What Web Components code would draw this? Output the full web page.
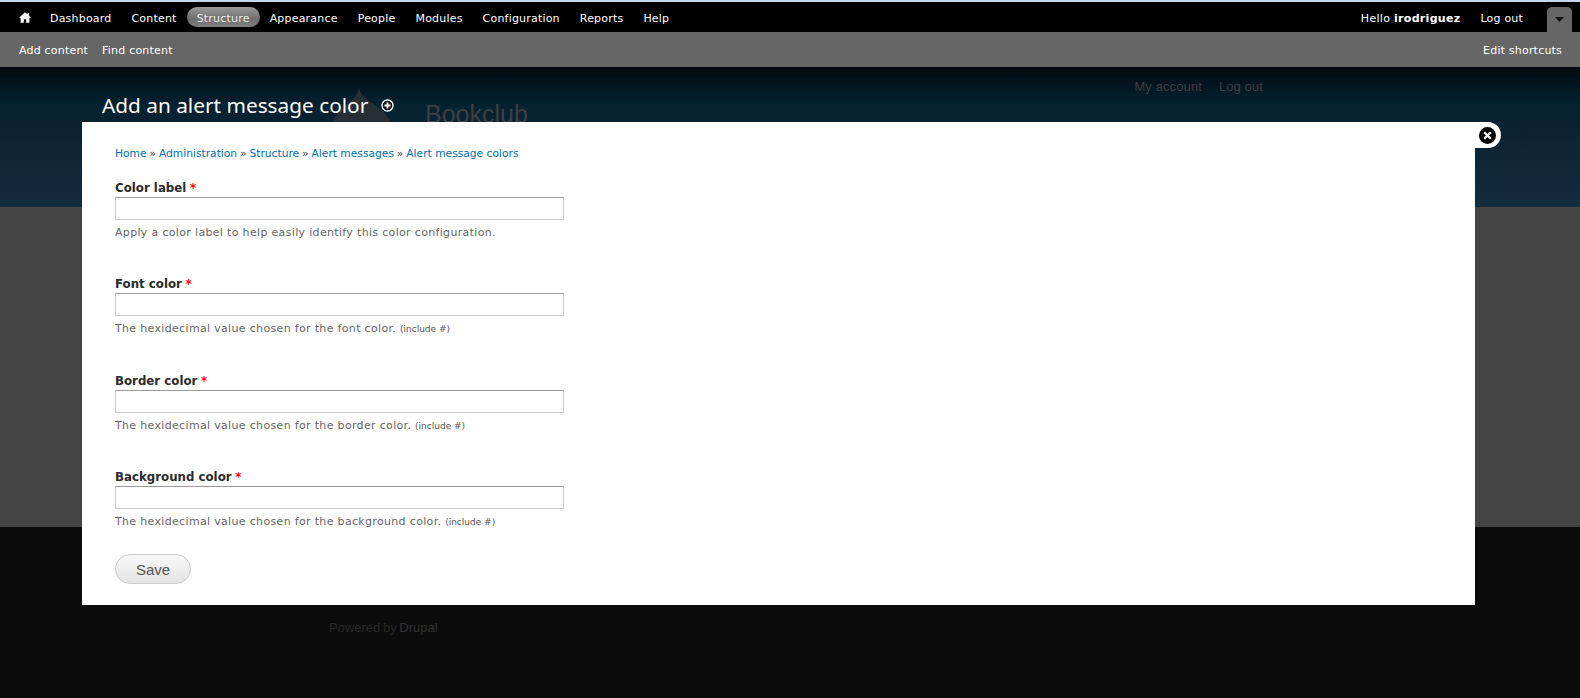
<!DOCTYPE html>
<html>
<head>
<meta charset="utf-8">
<title>Add an alert message color</title>
<style>
  html, body { margin: 0; height: 698px; overflow: hidden; background: #0b0b0b; }
  body { position: relative; font-family: "DejaVu Sans", sans-serif; }
</style>
</head>
<body>
<admin-toolbar>
  <tool-link slot="nav">Dashboard</tool-link>
  <tool-link slot="nav">Content</tool-link>
  <tool-link slot="nav" active>Structure</tool-link>
  <tool-link slot="nav">Appearance</tool-link>
  <tool-link slot="nav">People</tool-link>
  <tool-link slot="nav">Modules</tool-link>
  <tool-link slot="nav">Configuration</tool-link>
  <tool-link slot="nav">Reports</tool-link>
  <tool-link slot="nav">Help</tool-link>
  <span slot="user">Hello <b>irodriguez</b></span>
  <span slot="logout">Log out</span>
  <span slot="shortcuts">Add content</span>
  <span slot="shortcuts">Find content</span>
  <span slot="edit">Edit shortcuts</span>
</admin-toolbar>
<site-page></site-page>
<overlay-layer>
  <span slot="title">Add an alert message color</span>
  <bread-crumb>
    <a>Home</a> » <a>Administration</a> » <a>Structure</a> » <a>Alert messages</a> » <a>Alert message colors</a>
  </bread-crumb>
  <form-field label="Color label">Apply a color label to help easily identify this color configuration.</form-field>
  <form-field label="Font color">The hexidecimal value chosen for the font color. <small>(include #)</small></form-field>
  <form-field label="Border color">The hexidecimal value chosen for the border color. <small>(include #)</small></form-field>
  <form-field label="Background color">The hexidecimal value chosen for the background color. <small>(include #)</small></form-field>
  <save-button>Save</save-button>
</overlay-layer>

<script>
class ToolLink extends HTMLElement {
  constructor() {
    super();
    this.attachShadow({ mode: "open" });
    this.shadowRoot.innerHTML = `
      <style>
        :host { display: block; padding: 0 10px; height: 20px; line-height: 23px; border-radius: 10px; color: #fff; white-space: nowrap; }
        :host([active]) { background: linear-gradient(#9a9a9a, #6e6e6e 60%, #808080); color: #eee; }
      </style>
      <slot></slot>`;
  }
}
customElements.define("tool-link", ToolLink);

class AdminToolbar extends HTMLElement {
  constructor() {
    super();
    this.attachShadow({ mode: "open" });
    this.shadowRoot.innerHTML = `
      <style>
        :host { display: block; font: 11px/1 "DejaVu Sans", sans-serif; letter-spacing: .2px; color: #fff; border-top: 2px solid #c6d6ea; }
        .bar { height: 30px; background: #000; display: flex; align-items: center; padding: 0 8px 0 19px; }
        .home { width: 12px; height: 11px; margin-right: 9px; display: block; }
        nav { display: flex; align-items: center; }
        .user { margin-left: auto; margin-top: 3px; letter-spacing: .3px; }
        .logout { margin-left: 20px; margin-top: 3px; }
        .tab { width: 25px; height: 25px; margin: 5px 0 0 24px; align-self: flex-start; background: #666; border-radius: 5px 5px 0 0; display: flex; align-items: center; justify-content: center; }
        .sub { height: 35px; background: #666; display: flex; align-items: center; padding: 2px 18px 0 19px; gap: 14px; box-sizing: border-box; }
        .edit { margin-left: auto; }
      </style>
      <div class="bar">
        <svg class="home" viewBox="0 0 15 13"><path fill="#fff" d="M7.5 0 0 6.8h2V13h4V8.6h3V13h4V6.8h2L12.6 4.3V1h-2v1.5z"/></svg>
        <nav><slot name="nav"></slot></nav>
        <span class="user"><slot name="user"></slot></span>
        <span class="logout"><slot name="logout"></slot></span>
        <div class="tab"><svg width="9" height="5" viewBox="0 0 9 5"><path fill="#111" d="M0 0h9L4.5 5z"/></svg></div>
      </div>
      <div class="sub">
        <slot name="shortcuts"></slot>
        <span class="edit"><slot name="edit"></slot></span>
      </div>`;
  }
}
customElements.define("admin-toolbar", AdminToolbar);

class SitePage extends HTMLElement {
  constructor() {
    super();
    this.attachShadow({ mode: "open" });
    this.shadowRoot.innerHTML = `
      <style>
        :host { display: block; font-family: "Liberation Sans", sans-serif; }
        header { height: 140px; background: linear-gradient(#020a10, #05202f 25%, #132c3d); display: flex; align-items: flex-start; padding: 0 317px 0 333px; color: #3d3f41; }
        .drop { width: 62px; height: 80px; margin-top: 21px; display: block; flex: none; }
        .name { font-size: 25px; line-height: 28px; margin: 33px 0 0 30px; }
        .links { margin-left: auto; display: flex; gap: 17px; font-size: 13px; letter-spacing: .1px; line-height: 16px; margin-top: 12px; }
        main { height: 320px; background: #444; }
        footer { height: 171px; background: #0b0b0b; font-size: 13px; word-spacing: -1px; color: #282828; padding: 93px 0 0 329px; box-sizing: border-box; }
        footer b { font-weight: normal; color: #333; }
      </style>
      <header>
        <svg class="drop" viewBox="0 0 62 80"><path fill="#272f36" d="M26 0C27 7 34 11 39 15 48 21 55 27 57 34 62 56 46 78 28 78 10 78-4 56 0 34 2 27 9 21 15 15 20 11 25 7 26 0z"/></svg>
        <span class="name">Bookclub</span>
        <div class="links"><span>My account</span><span>Log out</span></div>
      </header>
      <main></main>
      <footer>Powered by <b>Drupal</b></footer>`;
  }
}
customElements.define("site-page", SitePage);

// sits over the whole page, below the toolbar
class OverlayLayer extends HTMLElement {
  constructor() {
    super();
    this.attachShadow({ mode: "open" });
    this.shadowRoot.innerHTML = `
      <style>
        :host { position: absolute; left: 0; top: 67px; width: 1580px; display: block; }
        .title { display: flex; align-items: center; height: 55px; padding: 20px 0 0 102px; box-sizing: border-box; color: #fff; font: 20.8px/26px "Noto Sans", "DejaVu Sans", sans-serif; }
        .title svg { margin: 2px 0 0 13px; }
        .modal { position: relative; margin-left: 82px; width: 1393px; height: 483px; background: #fff; box-sizing: border-box; padding: 25px 33px 0; font: 11px "DejaVu Sans", sans-serif; }
        .close { position: absolute; top: 0; left: 1380px; width: 39px; height: 26px; background: #fff; border-radius: 0 13px 13px 0; display: flex; align-items: center; justify-content: flex-end; padding-right: 5px; box-sizing: border-box; }
      </style>
      <div class="title">
        <slot name="title"></slot>
        <svg width="13" height="13" viewBox="0 0 13 13"><circle cx="6.5" cy="6.5" r="5.5" fill="#111" stroke="#fff" stroke-width="1.4"/><path d="M6.5 3.5v6M3.5 6.5h6" stroke="#fff" stroke-width="2"/></svg>
      </div>
      <div class="modal">
        <slot></slot>
        <div class="close"><svg width="17" height="17" viewBox="0 0 17 17"><circle cx="8.5" cy="8.5" r="8.5" fill="#000"/><path d="M5.2 5.2l6.6 6.6M11.8 5.2l-6.6 6.6" stroke="#fff" stroke-width="2.3"/></svg></div>
      </div>`;
  }
}
customElements.define("overlay-layer", OverlayLayer);

class BreadCrumb extends HTMLElement {
  constructor() {
    super();
    this.attachShadow({ mode: "open" });
    this.shadowRoot.innerHTML = `
      <style>
        :host { display: block; font-size: 10.7px; line-height: 14px; word-spacing: -.5px; color: #333; margin-bottom: 19px; white-space: nowrap; }
        ::slotted(a) { color: #0071b3; word-spacing: 0; }
      </style>
      <slot></slot>`;
  }
}
customElements.define("bread-crumb", BreadCrumb);

class FormField extends HTMLElement {
  constructor() {
    super();
    this.attachShadow({ mode: "open" });
    this.shadowRoot.innerHTML = `
      <style>
        :host { display: block; height: 96.4px; }
        label { display: block; font-weight: bold; font-size: 11.8px; line-height: 16px; color: #2b2b2b; margin-bottom: 1px; }
        i { color: #f00; font-style: normal; margin-left: -.5px; }
        input { display: block; width: 449px; height: 23px; box-sizing: border-box; margin: 0; padding: 0; background: #fff; border: 1px solid #ccc; border-top-color: #999; border-radius: 0; outline: 0; }
        .hint { font-size: 11px; line-height: 14px; letter-spacing: .33px; margin-top: 6px; color: #666; white-space: nowrap; }
        ::slotted(small) { font-size: 9px; letter-spacing: 0; color: #555; }
      </style>
      <label><span></span> <i>*</i></label>
      <input type="text">
      <div class="hint"><slot></slot></div>`;
    this.shadowRoot.querySelector("label span").textContent = this.getAttribute("label");
  }
}
customElements.define("form-field", FormField);

class SaveButton extends HTMLElement {
  constructor() {
    super();
    this.attachShadow({ mode: "open" });
    this.shadowRoot.innerHTML = `
      <style>
        :host { display: block; width: 76px; height: 30px; box-sizing: border-box; margin-top: -12px; border: 1px solid #ccc; border-radius: 15px; background: linear-gradient(#f8f8f8, #e4e4e4); font: 15px/30px "Liberation Sans", sans-serif; color: #555; text-align: center; }
      </style>
      <slot></slot>`;
  }
}
customElements.define("save-button", SaveButton);
</script>
</body>
</html>
